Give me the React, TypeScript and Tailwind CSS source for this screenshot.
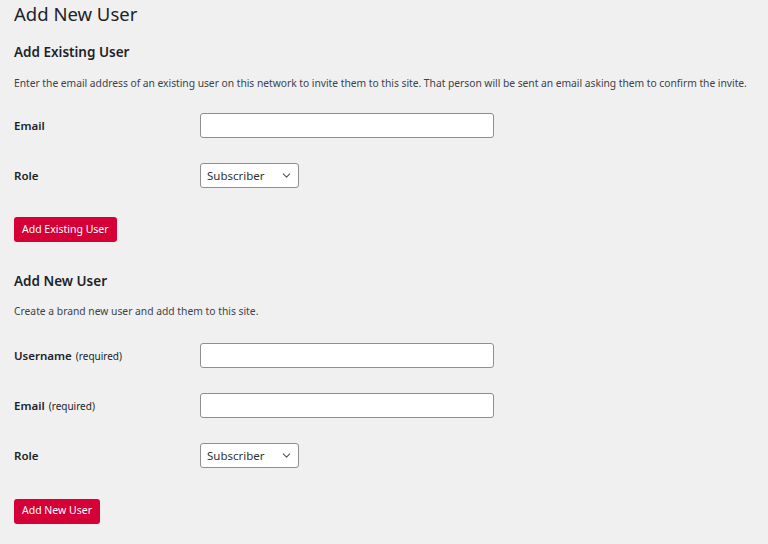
import { ChevronDown } from 'lucide-react';

const font = { fontFamily: '"Noto Sans", "Open Sans", sans-serif' };

function TextRow({ label, hint }: { label: string; hint?: string }) {
  return (
    <div className="flex h-[25px] items-center">
      <label className="w-[186px] text-[11.5px] font-semibold text-[#1d2327]">
        {label}
        {hint && <span className="ml-1 text-[10px] font-normal">{hint}</span>}
      </label>
      <input
        type="text"
        className="h-[25px] w-[294px] rounded-[3px] border border-[#8c8f94] bg-white"
      />
    </div>
  );
}

function RoleRow() {
  return (
    <div className="flex h-[25px] items-center">
      <label className="w-[186px] text-[11.5px] font-semibold text-[#1d2327]">Role</label>
      <div className="flex h-[25px] w-[99px] items-center justify-between rounded-[3px] border border-[#8c8f94] bg-white pl-[6px] pr-[5px]">
        <span className="text-[11.5px] text-[#2c3338]">Subscriber</span>
        <ChevronDown size={13} strokeWidth={2} className="text-[#50575e]" />
      </div>
    </div>
  );
}

function RedButton({ children }: { children: string }) {
  return (
    <button className="h-[25px] rounded-[3px] bg-[#d50036] px-[8px] text-[10.5px] text-white">
      {children}
    </button>
  );
}

export default function App() {
  return (
    <div className="h-[544px] w-[768px] overflow-hidden bg-[#f0f0f1] px-[14px]" style={font}>
      <h1 className="pt-[1px] text-[18.5px] leading-[26px] text-[#1d2327]">Add New User</h1>

      <h2 className="mt-[15px] text-[13.5px] font-semibold leading-[20px] text-[#1d2327]">Add Existing User</h2>
      <p className="mt-[12px] text-[10.3px] leading-[18px] tracking-[-0.03px] text-[#3c434a]">
        Enter the email address of an existing user on this network to invite them to this site. That person will be sent an email asking them to confirm the invite.
      </p>

      <div className="mt-[21px] flex flex-col gap-[25px]">
        <TextRow label="Email" />
        <RoleRow />
      </div>
      <div className="mt-[27px]">
        <RedButton>Add Existing User</RedButton>
      </div>

      <h2 className="mt-[29px] text-[13.5px] font-semibold leading-[20px] text-[#1d2327]">Add New User</h2>
      <p className="mt-[11px] text-[10.3px] leading-[18px] text-[#3c434a]">
        Create a brand new user and add them to this site.
      </p>

      <div className="mt-[23px] flex flex-col gap-[25px]">
        <TextRow label="Username" hint="(required)" />
        <TextRow label="Email" hint="(required)" />
        <RoleRow />
      </div>
      <div className="mt-[28px]">
        <RedButton>Add New User</RedButton>
      </div>
    </div>
  );
}
